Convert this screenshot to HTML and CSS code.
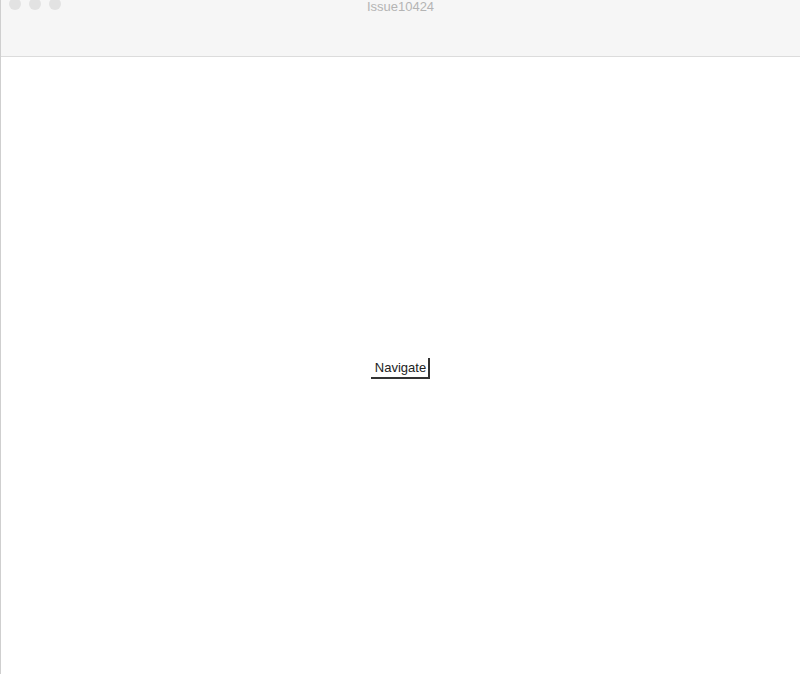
FILE: index.html
```html
<!DOCTYPE html>
<html>
<head>
<meta charset="utf-8">
<link rel="stylesheet" href="styles.css">
</head>
<body>
<div class="window">
  <div class="titlebar">
    <div class="lights">
      <span class="light"></span>
      <span class="light"></span>
      <span class="light"></span>
    </div>
    <div class="title">Issue10424</div>
  </div>
  <div class="content">
    <button class="nav-btn">Navigate</button>
  </div>
</div>
</body>
</html>
```
FILE: styles.css
```css
html, body {
  margin: 0;
  padding: 0;
  width: 800px;
  height: 674px;
  overflow: hidden;
  background: #ffffff;
  font-family: "Liberation Sans", Arial, sans-serif;
}
.window {
  width: 800px;
  height: 674px;
  display: flex;
  flex-direction: column;
  border-left: 1px solid #cfcfcf;
  box-sizing: border-box;
}
.titlebar {
  position: relative;
  height: 56px;
  background: #f6f6f6;
  border-bottom: 1px solid #dcdcdc;
  flex-shrink: 0;
}
.lights {
  position: absolute;
  left: 8px;
  top: -2px;
  display: flex;
  gap: 8px;
}
.light {
  width: 12px;
  height: 12px;
  border-radius: 50%;
  background: #e2e2e2;
}
.title {
  text-align: center;
  font-size: 13px;
  color: #b4b4b4;
  line-height: 13px;
}
.content {
  flex: 1;
  display: flex;
  align-items: center;
  justify-content: center;
  padding-top: 6px;
}
.nav-btn {
  font-family: "Liberation Sans", Arial, sans-serif;
  font-size: 13px;
  color: #222;
  background: #fff;
  border: none;
  border-right: 2px solid #333;
  border-bottom: 2px solid #333;
  padding: 2px 2px 2px 4px;
  line-height: 15px;
}
```
